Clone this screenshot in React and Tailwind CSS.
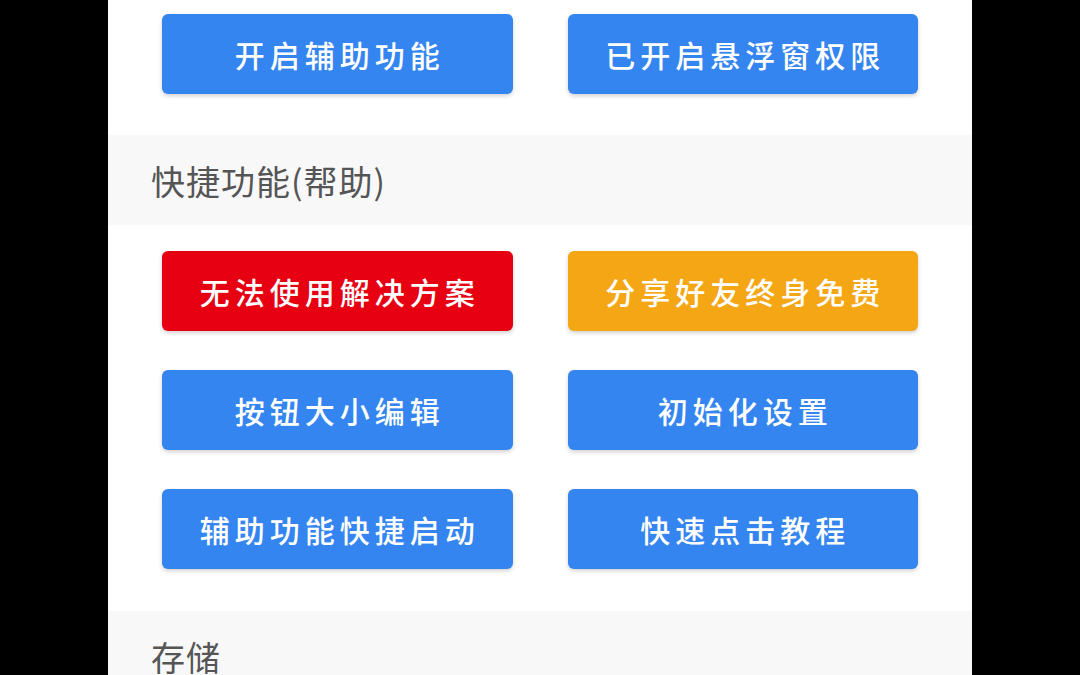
const font = { fontFamily: '"Noto Sans CJK SC", "Noto Sans", sans-serif' };

const topButtons = [
  { label: "开启辅助功能", color: "blue" },
  { label: "已开启悬浮窗权限", color: "blue" },
];

const helpButtons = [
  { label: "无法使用解决方案", color: "red" },
  { label: "分享好友终身免费", color: "orange" },
  { label: "按钮大小编辑", color: "blue" },
  { label: "初始化设置", color: "blue" },
  { label: "辅助功能快捷启动", color: "blue" },
  { label: "快速点击教程", color: "blue" },
];

const colors = {
  blue: "bg-[#3485f0]",
  red: "bg-[#e60012]",
  orange: "bg-[#f5a614]",
};

function ActionButton({ label, color }) {
  return (
    <button
      className={`flex h-[80px] items-center justify-center rounded-[6px] ${colors[color]} pl-[5px] text-[30px] font-medium tracking-[5px] text-white shadow-[0_2px_4px_rgba(0,0,0,0.18)]`}
    >
      {label}
    </button>
  );
}

function SectionHeader({ title }) {
  return (
    <div className="flex h-[90px] items-center bg-[#f8f8f9] pl-[43px] text-[34px] tracking-[1px] text-[#555555]">
      {title}
    </div>
  );
}

export default function App() {
  return (
    <div className="flex h-[675px] w-[1080px] justify-center overflow-hidden bg-black" style={font}>
      <div className="w-[864px] bg-white">
        <div className="grid grid-cols-2 gap-x-[55px] px-[54px] pb-[41px] pt-[14px]">
          {topButtons.map((b) => (
            <ActionButton key={b.label} {...b} />
          ))}
        </div>

        <SectionHeader title="快捷功能(帮助)" />

        <div className="grid grid-cols-2 gap-x-[55px] gap-y-[39px] px-[54px] pb-[42px] pt-[26px]">
          {helpButtons.map((b) => (
            <ActionButton key={b.label} {...b} />
          ))}
        </div>

        <SectionHeader title="存储" />
      </div>
    </div>
  );
}
